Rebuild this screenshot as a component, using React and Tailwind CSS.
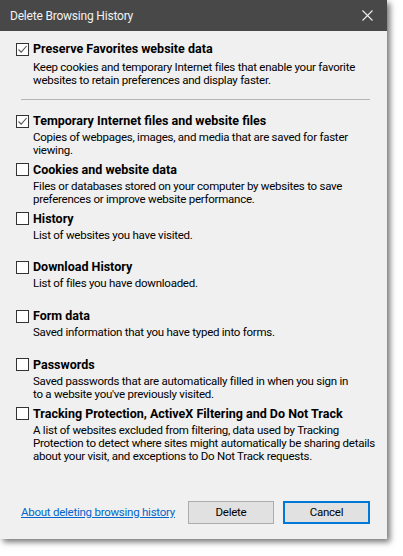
import React, { useState } from "react";

const items = [
  {
    id: "temp",
    label: "Temporary Internet files and website files",
    desc: ["Copies of webpages, images, and media that are saved for faster", "viewing."],
    checked: true,
  },
  {
    id: "cookies",
    label: "Cookies and website data",
    desc: [
      "Files or databases stored on your computer by websites to save",
      "preferences or improve website performance.",
    ],
    checked: false,
  },
  {
    id: "history",
    label: "History",
    desc: ["List of websites you have visited."],
    checked: false,
  },
  {
    id: "downloads",
    label: "Download History",
    desc: ["List of files you have downloaded."],
    checked: false,
  },
  {
    id: "forms",
    label: "Form data",
    desc: ["Saved information that you have typed into forms."],
    checked: false,
  },
  {
    id: "passwords",
    label: "Passwords",
    desc: [
      "Saved passwords that are automatically filled in when you sign in",
      "to a website you've previously visited.",
    ],
    checked: false,
  },
  {
    id: "tracking",
    label: "Tracking Protection, ActiveX Filtering and Do Not Track",
    desc: [
      "A list of websites excluded from filtering, data used by Tracking",
      "Protection to detect where sites might automatically be sharing details",
      "about your visit, and exceptions to Do Not Track requests.",
    ],
    checked: false,
  },
];

const CheckBox = ({ checked, onClick }) => (
  <button
    onClick={onClick}
    className="w-[13px] h-[13px] shrink-0 border border-[#333333] bg-white flex items-center justify-center"
  >
    {checked && (
      <svg width="11" height="11" viewBox="0 0 11 11">
        <path d="M1.5 5.5 L4.2 8.2 L9.6 2" fill="none" stroke="#555555" strokeWidth="1.1" />
      </svg>
    )}
  </button>
);

const Option = ({ label, desc, checked, onToggle, className, descGap = "mt-[3px]" }) => (
  <div className={className}>
    <div className="flex items-center gap-[4px] h-[14px]">
      <CheckBox checked={checked} onClick={onToggle} />
      <span className="font-bold text-black text-[12.5px] leading-[14px]">{label}</span>
    </div>
    <div className={`ml-[17px] ${descGap} leading-[13px] text-black text-[11.5px] tracking-[-0.25px]`}>
      {desc.map((line, i) => (
        <div key={i} className="whitespace-nowrap">
          {line}
        </div>
      ))}
    </div>
  </div>
);

export default function App() {
  const [preserve, setPreserve] = useState(true);
  const [checks, setChecks] = useState(
    Object.fromEntries(items.map((i) => [i.id, i.checked]))
  );

  const toggle = (id) => setChecks((c) => ({ ...c, [id]: !c[id] }));

  return (
    <div
      className="w-[403px] h-[556px] bg-white text-[12px]"
      style={{ fontFamily: "Roboto, 'Noto Sans', sans-serif" }}
    >
      <div className="w-[387px] h-[539px] bg-[#f0f0f0] flex flex-col shadow-[3px_3px_6px_rgba(0,0,0,0.55)]">
        {/* title bar */}
        <div className="h-[31px] bg-[#484848] flex items-center justify-between pl-[10px] pr-[14px] shrink-0">
          <span className="text-[#f2f2f2] text-[12px] tracking-[-0.2px]">Delete Browsing History</span>
          <svg width="11" height="11" viewBox="0 0 11 11">
            <path d="M0.5 0.5 L10.5 10.5 M10.5 0.5 L0.5 10.5" stroke="#eeeeee" strokeWidth="1.1" />
          </svg>
        </div>

        <div className="pl-[16px] pt-[11px]">
          <Option
            label="Preserve Favorites website data"
            desc={[
              "Keep cookies and temporary Internet files that enable your favorite",
              "websites to retain preferences and display faster.",
            ]}
            checked={preserve}
            onToggle={() => setPreserve(!preserve)}
            className="h-[57px]"
            descGap="mt-[5px]"
          />
          <div className="ml-[5px] w-[349px] h-px bg-[#b5b5b5] mb-[14px]" />

          {items.map((item) => (
            <Option
              key={item.id}
              label={item.label}
              desc={item.desc}
              checked={checks[item.id]}
              onToggle={() => toggle(item.id)}
              className="h-[48.8px]"
            />
          ))}
        </div>

        <div className="mt-auto flex items-center pl-[21px] pr-[17px] pb-[15px] text-[11.5px] tracking-[-0.25px]">
          <a href="#" className="text-[#0066cc] underline flex-1 whitespace-nowrap">
            About deleting browsing history
          </a>
          <button className="w-[86px] h-[23px] bg-[#e1e1e1] border border-[#adadad] text-black">
            Delete
          </button>
          <button className="ml-[9px] w-[87px] h-[23px] bg-[#e1e1e1] border-2 border-[#0078d7] text-black">
            Cancel
          </button>
        </div>
      </div>
    </div>
  );
}
